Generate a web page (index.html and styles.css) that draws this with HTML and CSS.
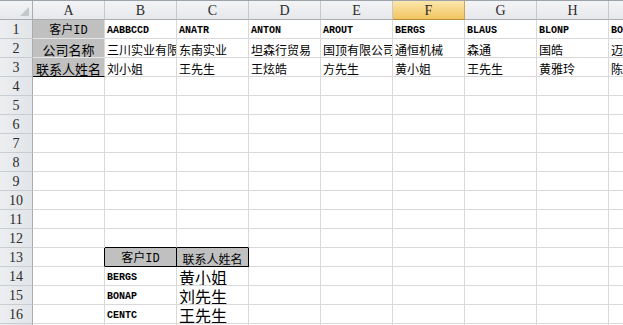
FILE: index.html
```html
<!DOCTYPE html>
<html lang="zh-CN">
<head>
<meta charset="utf-8">
<title>客户信息</title>
<link rel="stylesheet" href="styles.css">
</head>
<body>
<div class="sheet">
  <div class="row head">
    <div class="corner"><span class="tri"></span></div>
    <div>A</div><div>B</div><div>C</div><div>D</div><div>E</div><div class="sel">F</div><div>G</div><div>H</div><div>I</div>
  </div>
  <div class="row">
    <div class="rh">1</div>
    <div class="key mix">客户ID</div>
    <div>AABBCCD</div><div>ANATR</div><div>ANTON</div><div>AROUT</div><div>BERGS</div><div>BLAUS</div><div>BLONP</div><div>BONAP</div>
  </div>
  <div class="row">
    <div class="rh">2</div>
    <div class="key cn13">公司名称</div>
    <div class="cn">三川实业有限公司</div><div class="cn">东南实业</div><div class="cn">坦森行贸易</div><div class="cn">国顶有限公司</div><div class="cn">通恒机械</div><div class="cn">森通</div><div class="cn">国皓</div><div class="cn">迈多贸易</div>
  </div>
  <div class="row">
    <div class="rh">3</div>
    <div class="key last cn13">联系人姓名</div>
    <div class="cn">刘小姐</div><div class="cn">王先生</div><div class="cn">王炫皓</div><div class="cn">方先生</div><div class="cn">黄小姐</div><div class="cn">王先生</div><div class="cn">黄雅玲</div><div class="cn">陈先生</div>
  </div>
  <div class="row"><div class="rh">4</div><div></div><div></div><div></div><div></div><div></div><div></div><div></div><div></div><div></div></div>
  <div class="row"><div class="rh">5</div><div></div><div></div><div></div><div></div><div></div><div></div><div></div><div></div><div></div></div>
  <div class="row"><div class="rh">6</div><div></div><div></div><div></div><div></div><div></div><div></div><div></div><div></div><div></div></div>
  <div class="row"><div class="rh">7</div><div></div><div></div><div></div><div></div><div></div><div></div><div></div><div></div><div></div></div>
  <div class="row"><div class="rh">8</div><div></div><div></div><div></div><div></div><div></div><div></div><div></div><div></div><div></div></div>
  <div class="row"><div class="rh">9</div><div></div><div></div><div></div><div></div><div></div><div></div><div></div><div></div><div></div></div>
  <div class="row"><div class="rh">10</div><div></div><div></div><div></div><div></div><div></div><div></div><div></div><div></div><div></div></div>
  <div class="row"><div class="rh">11</div><div></div><div></div><div></div><div></div><div></div><div></div><div></div><div></div><div></div></div>
  <div class="row"><div class="rh">12</div><div></div><div class="above"></div><div class="above"></div><div></div><div></div><div></div><div></div><div></div><div></div></div>
  <div class="row">
    <div class="rh">13</div>
    <div class="left-of"></div>
    <div class="th mix">客户ID</div><div class="th cn">联系人姓名</div>
    <div></div><div></div><div></div><div></div><div></div><div></div>
  </div>
  <div class="row">
    <div class="rh">14</div><div></div>
    <div>BERGS</div><div class="cn big">黄小姐</div>
    <div></div><div></div><div></div><div></div><div></div><div></div>
  </div>
  <div class="row">
    <div class="rh">15</div><div></div>
    <div>BONAP</div><div class="cn big">刘先生</div>
    <div></div><div></div><div></div><div></div><div></div><div></div>
  </div>
  <div class="row">
    <div class="rh">16</div><div></div>
    <div>CENTC</div><div class="cn big">王先生</div>
    <div></div><div></div><div></div><div></div><div></div><div></div>
  </div>
  <div class="row"><div class="rh">17</div><div></div><div></div><div></div><div></div><div></div><div></div><div></div><div></div><div></div></div>
</div>
</body>
</html>
```
FILE: styles.css
```css
* {
  box-sizing: border-box;
}

html,
body {
  margin: 0;
  height: 100%;
  overflow: hidden;
  background: #ffffff;
}

.sheet {
  width: 623px;
  overflow: hidden;
  border-top: 1px solid #9da3aa;
}

/* one worksheet row: row header + columns A–I */
.row {
  display: grid;
  grid-template-columns: 33px repeat(9, 72px);
  height: 19px;
}

.row > div {
  display: flex;
  align-items: flex-end;
  overflow: hidden;
  white-space: nowrap;
  padding: 0 0 2px 2px;
  border-right: 1px solid #d9d9d9;
  border-bottom: 1px solid #d9d9d9;
  font: bold 10px/10px "Liberation Mono", monospace;
  color: #000000;
}

/* column letters */
.head > div {
  justify-content: center;
  align-items: center;
  padding: 1px 0 0 0;
  background: linear-gradient(#f3f4f6, #e6e8eb);
  border-right: 1px solid #c6c9cd;
  border-bottom: 1px solid #a9adb2;
  font: normal 14px/14px "Liberation Serif", serif;
  color: #2b2b2b;
}

.head > .sel {
  background: linear-gradient(#fbe6ab, #f2c560);
  border-right-color: #c9a55a;
  border-bottom-color: #b58e3c;
}

.head > .corner {
  position: relative;
  border-right-color: #a9adb2;
}

.corner .tri {
  position: absolute;
  right: 3px;
  bottom: 3px;
  width: 0;
  height: 0;
  border-left: 9px solid transparent;
  border-bottom: 9px solid #c3c7cc;
}

/* row numbers */
.row > .rh {
  justify-content: center;
  align-items: center;
  padding: 1px 0 0 0;
  background: linear-gradient(to right, #eceef0, #e2e5e9);
  border-right: 1px solid #a9adb2;
  border-bottom: 1px solid #c9ccd0;
  font: normal 14px/14px "Liberation Serif", serif;
  color: #2b2b2b;
}

/* field-name cells in column A */
.row > .key {
  justify-content: center;
  padding: 0 0 1px 0;
  background: #c0c0c0;
  border-bottom-color: #e6e6e6;
}

.row > .key.last {
  border-bottom-color: #000000;
}

.row > .mix {
  font: normal 12px/12px "Liberation Mono", "Noto Sans CJK SC", monospace;
}

.row > .cn13 {
  font: normal 13px/13px "Noto Sans CJK SC", sans-serif;
}

.row > .cn {
  padding-bottom: 1px;
  font: normal 12px/12px "Noto Sans CJK SC", sans-serif;
}

.row > .big {
  padding-bottom: 0;
  font-size: 16px;
  line-height: 16px;
}

/* small lookup table header B13:C13 */
.row > .th {
  justify-content: center;
  padding: 0 0 1px 0;
  background: #c0c0c0;
  border-right-color: #000000;
  border-bottom-color: #000000;
}

.row > .above {
  border-bottom-color: #000000;
}

.row > .left-of {
  border-right-color: #000000;
}
```
